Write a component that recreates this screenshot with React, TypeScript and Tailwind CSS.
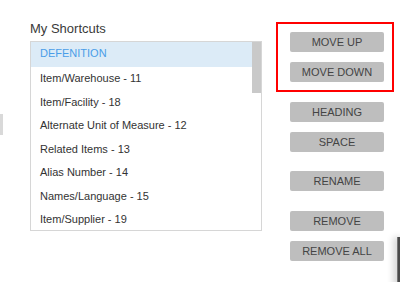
import React from "react";

const items = [
  "Item/Warehouse - 11",
  "Item/Facility - 18",
  "Alternate Unit of Measure - 12",
  "Related Items - 13",
  "Alias Number - 14",
  "Names/Language - 15",
  "Item/Supplier - 19",
];

function Btn({ label, className = "" }: { label: string; className?: string }) {
  return (
    <button
      className={
        "w-[94px] h-[20px] rounded-[2px] bg-[#bebebe] text-[#444444] text-[11px] leading-[20px] text-center uppercase " +
        className
      }
    >
      {label}
    </button>
  );
}

export default function App() {
  return (
    <div
      className="relative w-[400px] h-[282px] overflow-hidden bg-white"
      style={{ fontFamily: '"Liberation Sans", Arial, sans-serif' }}
    >
      <div className="flex items-start">
        <div className="ml-[30px] mt-[21px] w-[232px]">
          <div className="text-[13px] leading-[15px] text-[#3a3a3a] mb-[5px]">My Shortcuts</div>
          <div className="flex h-[190px] border border-[#d6d6d6] overflow-hidden">
            <div className="flex-1 flex flex-col">
              <div className="bg-[#dcebf7] text-[#4a9de8] text-[11px] leading-[23px] pb-[2px] pl-[9px]">
                DEFENITION
              </div>
              {items.map((t) => (
                <div
                  key={t}
                  className="shrink-0 h-[23.5px] leading-[23.5px] text-[11px] text-[#333333] pl-[9px] whitespace-nowrap"
                >
                  {t}
                </div>
              ))}
            </div>
            <div className="w-[9px] flex flex-col">
              <div className="h-[51px] bg-[#c9c9c9]" />
            </div>
          </div>
        </div>
        <div className="ml-[14px] mt-[22px] w-[118px] flex flex-col">
          <div className="border-2 border-[#ff0000] pt-[8px] pb-[8px] pl-[12px] pr-[8px] flex flex-col gap-[10px]">
            <Btn label="MOVE UP" />
            <Btn label="MOVE DOWN" />
          </div>
          <div className="pl-[14px] flex flex-col">
            <Btn label="HEADING" className="mt-[10px]" />
            <Btn label="SPACE" className="mt-[10px]" />
            <Btn label="RENAME" className="mt-[19px]" />
            <Btn label="REMOVE" className="mt-[20px]" />
            <Btn label="REMOVE ALL" className="mt-[10px]" />
          </div>
        </div>
      </div>
      <div className="absolute left-0 top-[114px] w-[3px] h-[21px] bg-[#d9d9d9]" />
      <div className="absolute left-[397px] top-[237px] w-[10px] h-[60px] bg-[#4a4a4a] border-l border-[#777777] shadow-[-4px_0_6px_rgba(0,0,0,0.15)]" />
    </div>
  );
}
